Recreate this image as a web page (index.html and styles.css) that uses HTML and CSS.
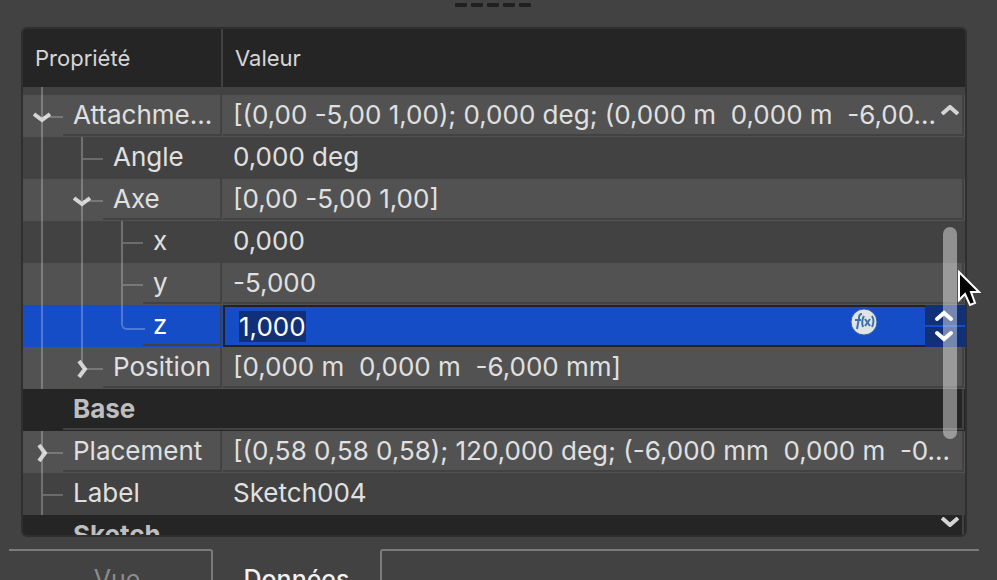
FILE: index.html
```html
<!DOCTYPE html>
<html lang="fr">
<head>
  <meta charset="UTF-8">
  <meta name="viewport" content="width=device-width, initial-scale=1.0">
  <title>Propriétés</title>
  <link rel="stylesheet" href="styles.css">
</head>
<body>
  <div class="grip"><i></i><i></i><i></i><i></i><i></i></div>

  <div class="panel">
    <table class="props">
      <thead>
        <tr><th class="col-name">Propriété</th><th>Valeur</th></tr>
      </thead>
      <tbody>
        <tr class="rest"><td><div class="name"><span class="indent line"></span></div></td><td></td></tr>
        <tr class="alt">
          <td><div class="name">
            <span class="indent line branch"><svg class="arrow" viewBox="0 0 18 18"><path d="M1 6 L9 12 L17 6"/></svg></span>
            <span class="label">Attachme...</span>
          </div></td>
          <td><div class="value">[(0,00 -5,00 1,00); 0,000 deg; (0,000 m  0,000 m  -6,00...</div></td>
        </tr>
        <tr>
          <td><div class="name">
            <span class="indent line"></span><span class="indent line branch"></span>
            <span class="label">Angle</span>
          </div></td>
          <td><div class="value">0,000 deg</div></td>
        </tr>
        <tr class="alt">
          <td><div class="name">
            <span class="indent line"></span>
            <span class="indent line branch"><svg class="arrow" viewBox="0 0 18 18"><path d="M1 6 L9 12 L17 6"/></svg></span>
            <span class="label">Axe</span>
          </div></td>
          <td><div class="value">[0,00 -5,00 1,00]</div></td>
        </tr>
        <tr>
          <td><div class="name">
            <span class="indent line"></span><span class="indent line"></span><span class="indent line branch"></span>
            <span class="label">x</span>
          </div></td>
          <td><div class="value">0,000</div></td>
        </tr>
        <tr class="alt">
          <td><div class="name">
            <span class="indent line"></span><span class="indent line"></span><span class="indent line branch"></span>
            <span class="label">y</span>
          </div></td>
          <td><div class="value">-5,000</div></td>
        </tr>
        <tr class="selected">
          <td><div class="name">
            <span class="indent line"></span><span class="indent line"></span><span class="indent last"></span>
            <label class="label" for="z">z</label>
          </div></td>
          <td>
            <div class="editor">
              <input type="text" id="z" value="1,000">
              <button class="fx" aria-label="Expression">
                <svg viewBox="0 0 28 28">
                  <circle cx="14" cy="14" r="13" fill="#e0e4e2" stroke="#2c5fae"/>
                  <g fill="none" stroke="#3f70ae" stroke-width="2">
                    <path d="M12 6 Q9 6 9 10 L7 21 M5 12 H11"/>
                    <path d="M14 8 Q11 13 13 19 M15 11 L20 18 M20 11 L15 18 M22 8 Q25 13 22 19"/>
                  </g>
                </svg>
              </button>
              <div class="spin">
                <button aria-label="Plus"><svg viewBox="0 0 20 12"><path d="M3 9 L10 3 L17 9"/></svg></button>
                <button aria-label="Moins"><svg viewBox="0 0 20 12"><path d="M3 3 L10 9 L17 3"/></svg></button>
              </div>
            </div>
          </td>
        </tr>
        <tr class="alt">
          <td><div class="name">
            <span class="indent line"></span>
            <span class="indent half branch"><svg class="arrow" viewBox="0 0 18 18"><path d="M6 1 L12 9 L6 17"/></svg></span>
            <span class="label">Position</span>
          </div></td>
          <td><div class="value">[0,000 m  0,000 m  -6,000 mm]</div></td>
        </tr>
        <tr class="group">
          <td colspan="2"><div class="name"><span class="indent"></span><span class="label">Base</span></div></td>
        </tr>
        <tr class="alt">
          <td><div class="name">
            <span class="indent line branch"><svg class="arrow" viewBox="0 0 18 18"><path d="M6 1 L12 9 L6 17"/></svg></span>
            <span class="label">Placement</span>
          </div></td>
          <td><div class="value">[(0,58 0,58 0,58); 120,000 deg; (-6,000 mm  0,000 m  -0...</div></td>
        </tr>
        <tr>
          <td><div class="name"><span class="indent line branch"></span><span class="label">Label</span></div></td>
          <td><div class="value">Sketch004</div></td>
        </tr>
        <tr class="group">
          <td colspan="2"><div class="name"><span class="indent"></span><span class="label">Sketch</span></div></td>
        </tr>
      </tbody>
    </table>

    <div class="scroll">
      <svg viewBox="0 0 18 10"><path d="M1 9 L9 2 L17 9"/></svg>
      <div class="track"><div class="thumb"></div></div>
      <svg viewBox="0 0 18 10"><path d="M1 1 L9 8 L17 1"/></svg>
    </div>
  </div>

  <div class="tabs">
    <button class="tab">Vue</button>
    <button class="tab active">Données</button>
    <span class="tab-rest"></span>
  </div>

  <svg class="cursor" viewBox="0 0 24 36">
    <path d="M2 2 V30 L8 24 L13 35 L18 33 L14 22 H22 Z"/>
  </svg>

  <script>
    const z = document.getElementById('z');
    z.focus();
    z.select();
  </script>
</body>
</html>
```
FILE: styles.css
```css
* {
  box-sizing: border-box;
}
body {
  margin: 0;
  height: 100vh;
  overflow: hidden;
  display: flex;
  flex-direction: column;
  background-color: #424242;
  color: #e0e0e0;
  font-family: Inter, "Liberation Sans", sans-serif;
  font-size: 26px;
}
button {
  border: none;
  padding: 0;
  background: none;
  font-family: inherit;
}
svg {
  display: block;
}

.grip {
  display: flex;
  justify-content: center;
  gap: 4px;
  padding: 3px 11px 20px 0;
}
.grip i {
  width: 12px;
  height: 4px;
  border-radius: 1px;
  background-color: #202020;
}

.panel {
  position: relative;
  flex: 1;
  min-height: 0;
  margin: 0 30px 0 21px;
  border: 2px solid #2f2f2f;
  border-radius: 6px;
  overflow: hidden;
}
.props {
  width: 100%;
  table-layout: fixed;
  border-collapse: collapse;
}
.props th {
  height: 58px;
  padding: 0 12px;
  background-color: #252525;
  color: #d6d6d6;
  font-size: 22px;
  font-weight: normal;
  text-align: left;
}
.props .col-name {
  width: 200px;
  box-shadow: inset -2px 0 #424242;
}
.props td {
  height: 42px;
  padding: 0;
}
.props .rest td,
.rest .name {
  height: 8px;
}
.alt {
  background-color: #525252;
}
.group {
  background-color: #252525;
  color: #bebebe;
  font-weight: bold;
}
.selected {
  background-color: #144dc6;
  color: #fff;
}

.name {
  display: flex;
  height: 42px;
}
.label,
.value {
  margin: 0 1px 1px 0;
  border: solid #424242;
  border-width: 0 2px 2px 0;
  line-height: 40px;
  white-space: pre;
  overflow: hidden;
}
.label {
  flex: 1;
  padding-left: 10px;
}
.value {
  height: 41px;
  padding-left: 10px;
}

/* tree lines */
.indent {
  position: relative;
  flex: none;
  width: 40px;
}
.line::before,
.half::before,
.last::before {
  content: "";
  position: absolute;
  left: 18px;
  top: 0;
  width: 2px;
  height: 100%;
  background-color: rgba(255, 255, 255, 0.25);
}
.half::before {
  height: 50%;
}
.last::before {
  width: 22px;
  height: 23px;
  background: none;
  border: solid rgba(255, 255, 255, 0.25);
  border-width: 0 0 2px 2px;
  border-bottom-left-radius: 6px;
}
.branch::after {
  content: "";
  position: absolute;
  left: 20px;
  right: 0;
  top: 21px;
  height: 2px;
  background-color: rgba(255, 255, 255, 0.22);
}
.arrow {
  position: absolute;
  left: 10px;
  top: 13px;
  width: 18px;
  height: 18px;
}
.arrow path,
.scroll path {
  fill: none;
  stroke: #d4d4d4;
  stroke-width: 4;
}

.editor {
  display: flex;
  align-items: stretch;
  height: 42px;
  border: solid #222;
  border-width: 2px 0 2px 2px;
}
.editor input {
  flex: 1;
  min-width: 0;
  padding: 0 0 0 14px;
  border: none;
  outline: none;
  background: none;
  color: #fff;
  font-family: inherit;
  font-size: 26px;
}
.editor input::selection {
  background-color: #123078;
  color: #fff;
}
.fx {
  width: 28px;
  margin-right: 47px;
}
.fx svg {
  width: 28px;
  height: 28px;
  margin-bottom: 8px;
}
.spin {
  display: flex;
  flex-direction: column;
  gap: 2px;
  width: 40px;
  margin: -2px 0;
}
.spin button {
  flex: 1;
  display: flex;
  align-items: flex-end;
  justify-content: center;
  padding-right: 2px;
  background-color: #123078;
}
.spin button:last-child {
  align-items: flex-start;
}
.spin svg {
  width: 20px;
  height: 12px;
  margin: 3px 0;
}
.spin path {
  fill: none;
  stroke: #fff;
  stroke-width: 4;
  stroke-linecap: round;
}

.scroll {
  position: absolute;
  top: 76px;
  right: 6px;
  bottom: 8px;
  width: 18px;
  display: flex;
  flex-direction: column;
}
.scroll svg {
  width: 18px;
  height: 10px;
}
.track {
  flex: 1;
  display: flex;
  justify-content: center;
  padding: 112px 2px 78px;
}
.thumb {
  width: 14px;
  border-radius: 7px;
  background-color: rgba(255, 255, 255, 0.42);
}

.tabs {
  display: flex;
  height: 31px;
  margin: 12px 18px 0 9px;
  overflow: hidden;
}
.tab,
.tab-rest {
  height: 58px;
  border-top: 2px solid #7b7b7b;
}
.tab {
  width: 204px;
  color: #8c8c8c;
  font-size: 25px;
  border-right: 2px solid #7b7b7b;
  border-top-right-radius: 3px;
  padding-left: 14px;
}
.tab.active {
  width: 167px;
  padding: 0;
  border-top-color: transparent;
  border-right: none;
  color: #f2f2f2;
  font-weight: 500;
}
.tab-rest {
  flex: 1;
  border-left: 2px solid #7b7b7b;
  border-top-left-radius: 3px;
}

.cursor {
  position: absolute;
  left: 957px;
  top: 270px;
  width: 24px;
  height: 36px;
}
.cursor path {
  fill: #000;
  stroke: #fff;
  stroke-width: 2;
}
```
